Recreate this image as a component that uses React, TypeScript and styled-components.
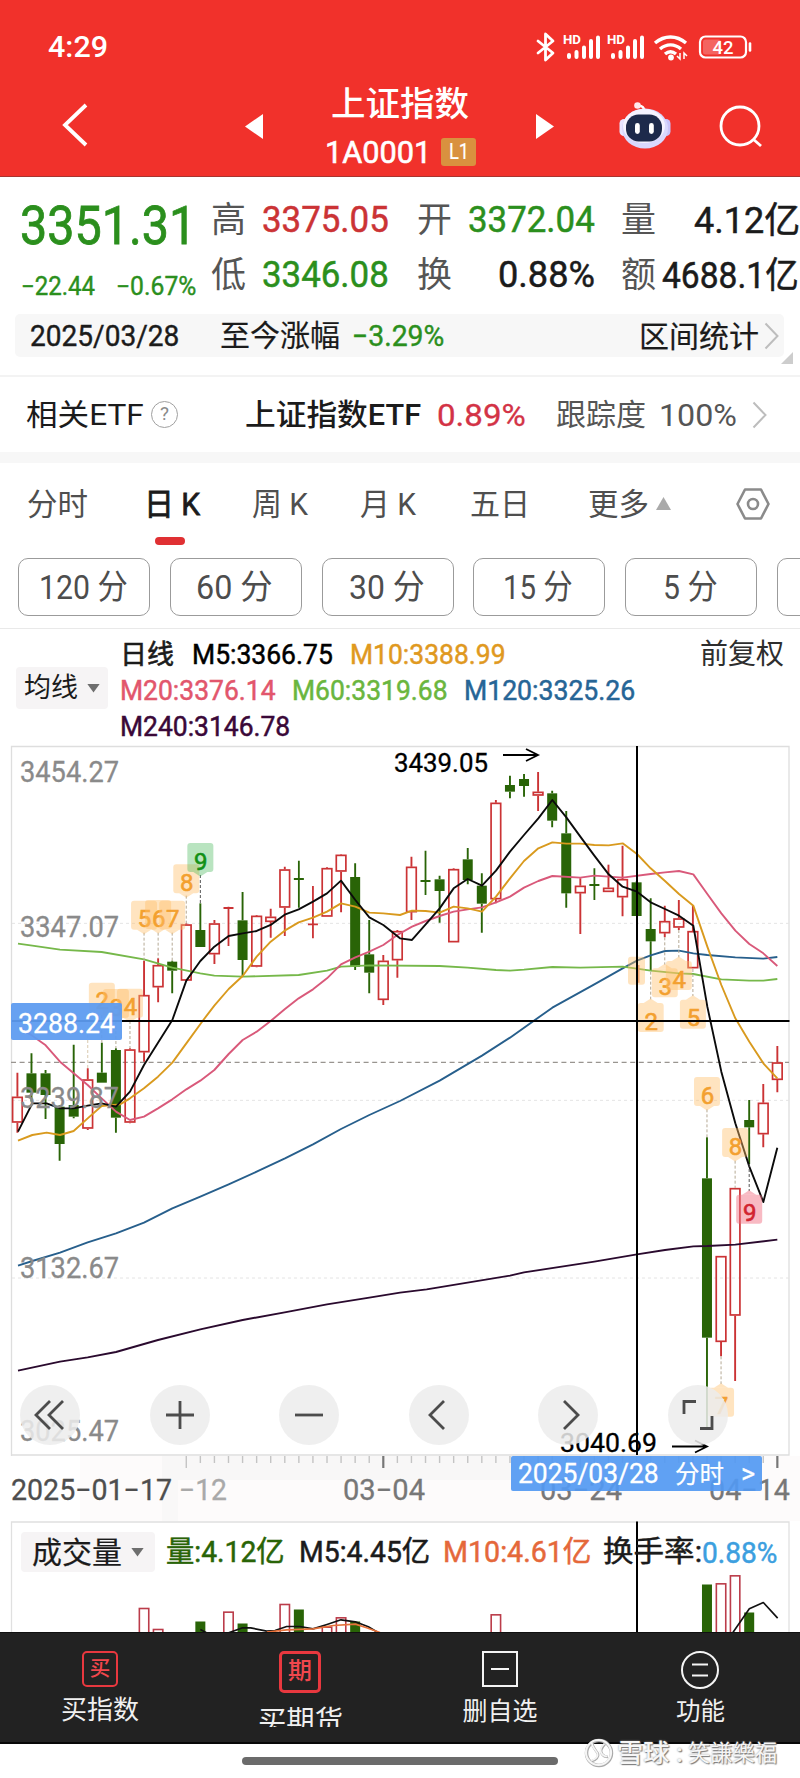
import React, { useLayoutEffect, useRef, useState } from "react";
import styled, { createGlobalStyle } from "styled-components";

const FONT = `Roboto, "Noto Sans CJK SC", sans-serif`;
const GREEN = "#2b8f1d";
const DEEP_GREEN = "#296407";
const RED = "#cb3335";

const Global = createGlobalStyle`
  * { box-sizing: border-box; }
  body { margin: 0; background: #fff; font-family: ${FONT}; color: #1b1b1b; }
`;

/* ---------- text that keeps a fixed column width ---------- */

const FitBox = styled.span<{ $w: number; $ml: number; $size: number; $color?: string; $weight: number; $dy: number; $ink: number }>`
  display: block;
  flex: none;
  width: ${(p) => p.$w}px;
  margin-left: ${(p) => p.$ml}px;
  margin-top: ${(p) => p.$dy}px;
  height: ${(p) => p.$size}px;
  font-size: ${(p) => p.$size}px;
  line-height: ${(p) => p.$size}px;
  font-weight: ${(p) => p.$weight};
  color: ${(p) => p.$color ?? "inherit"};
  -webkit-text-stroke: ${(p) => p.$ink}px currentColor;
  white-space: nowrap;
`;
const FitInner = styled.span`
  display: inline-block;
  transform-origin: left center;
`;

type FitProps = {
  w: number;
  ml?: number;
  dy?: number;
  size: number;
  color?: string;
  weight?: number;
  ink?: number;
  children: React.ReactNode;
};

function Fit({ w, ml = 0, dy = 0, size, color, weight = 400, ink = 0, children }: FitProps) {
  const ref = useRef<HTMLSpanElement>(null);
  const [scale, setScale] = useState(1);
  useLayoutEffect(() => {
    if (ref.current) setScale(w / ref.current.offsetWidth);
  }, [w, children]);
  return (
    <FitBox $w={w} $ml={ml} $size={size} $color={color} $weight={weight} $dy={dy} $ink={ink}>
      <FitInner ref={ref} style={{ transform: `scaleX(${scale})` }}>
        {children}
      </FitInner>
    </FitBox>
  );
}

/* ---------- shell ---------- */

const Page = styled.div`
  width: 800px;
  height: 1778px;
  overflow: hidden;
  background: #fff;
  display: flex;
  flex-direction: column;
`;
const Header = styled.header`
  height: 177px;
  flex: none;
  background: #f1312b;
  border-bottom: 1px solid #a8342f;
  color: #fff;
`;
const StatusBar = styled.div`
  height: 84px;
  padding: 10px 0 0 48px;
  display: flex;
  align-items: center;
`;
const StatusIcons = styled.svg`
  margin-left: 427px;
`;
const TitleBar = styled.div`
  height: 92px;
  display: flex;
  align-items: flex-start;
`;
const Icon = styled.svg<{ $ml: number; $mt?: number }>`
  flex: none;
  display: block;
  margin-left: ${(p) => p.$ml}px;
  margin-top: ${(p) => p.$mt ?? 0}px;
`;
const TitleBlock = styled.div`
  width: 154px;
  margin-left: 62px;
  display: flex;
  flex-direction: column;
`;
const CodeLine = styled.div`
  display: flex;
  align-items: center;
  height: 30px;
  margin-top: 16px;
`;
const LevelBadge = styled.span`
  width: 35px;
  height: 28px;
  margin-left: 10px;
  border-radius: 3px;
  background: #d9913f;
  display: flex;
  align-items: center;
  justify-content: center;
`;

/* ---------- quote ---------- */

const Quote = styled.section`
  height: 137px;
  flex: none;
  display: flex;
`;
const PriceCol = styled.div`
  width: 211px;
  flex: none;
  padding: 22px 0 0 21px;
`;
const Changes = styled.div`
  display: flex;
  margin-top: 21px;
`;
const Facts = styled.div`
  width: 589px;
  padding-top: 25px;
  display: flex;
  flex-direction: column;
  gap: 18px;
`;
const FactRow = styled.div`
  display: flex;
  align-items: center;
  height: 37px;
`;
const RangeBar = styled.div`
  width: 769px;
  height: 43px;
  flex: none;
  margin-left: 15px;
  border-radius: 5px;
  background: #f7f7f7;
  display: flex;
  align-items: center;
`;
const Corner = styled.div`
  height: 20px;
  flex: none;
  display: flex;
  justify-content: flex-end;
  align-items: flex-start;
  padding-right: 7px;
  border-bottom: 2px solid #f3f3f3;
`;
const CornerMark = styled.div`
  width: 12px;
  height: 12px;
  margin-top: -5px;
  background: #cdcdcd;
  clip-path: polygon(100% 0, 100% 100%, 0 100%);
`;
const EtfRow = styled.div`
  height: 75px;
  flex: none;
  display: flex;
  align-items: center;
`;
const Help = styled.span`
  width: 27px;
  height: 27px;
  flex: none;
  margin-left: 7px;
  border: 1.5px solid #a0a0a0;
  border-radius: 50%;
  color: #8a8a8a;
  font-size: 19px;
  line-height: 24px;
  text-align: center;
`;
const Band = styled.div`
  height: 11px;
  flex: none;
  background: #f7f7f7;
`;

/* ---------- period tabs ---------- */

const Tabs = styled.nav`
  height: 95px;
  flex: none;
  display: flex;
  padding: 26px 0 0 27px;
  color: #4f4f4f;
`;
const Tab = styled.div<{ $w: number }>`
  width: ${(p) => p.$w}px;
  display: flex;
  flex-direction: column;
`;
const Underline = styled.span`
  width: 30px;
  height: 8px;
  margin: 17px 0 0 9px;
  border-radius: 4px;
  background: #e03033;
`;
const Minutes = styled.div`
  height: 71px;
  flex: none;
  display: flex;
  gap: 19.8px;
  padding-left: 18px;
  overflow: hidden;
  border-bottom: 1px solid #e9e9e9;
`;
const MinuteButton = styled.div`
  flex: none;
  width: 132px;
  height: 58px;
  border: 1px solid #9b9b9b;
  border-radius: 10px;
  display: flex;
  align-items: center;
  justify-content: center;
  color: #4d4d4d;
`;

/* ---------- moving averages legend ---------- */

const Legend = styled.div`
  height: 116px;
  flex: none;
  display: flex;
`;
const Chip = styled.div<{ $w: number; $h: number; $mt: number; $ml: number }>`
  flex: none;
  width: ${(p) => p.$w}px;
  height: ${(p) => p.$h}px;
  margin: ${(p) => p.$mt}px 0 0 ${(p) => p.$ml}px;
  border-radius: 4px;
  background: #f6f4f5;
  display: flex;
  align-items: center;
`;
const Down = styled.span`
  width: 13px;
  height: 9px;
  margin-left: 9px;
  background: #6e6e6e;
  clip-path: polygon(0 0, 100% 0, 50% 100%);
`;
const LegendLines = styled.div`
  width: 690px;
  padding-top: 8px;
  display: flex;
  flex-direction: column;
`;
const LegendLine = styled.div`
  display: flex;
  align-items: center;
  height: 36px;
`;

/* ---------- chart ---------- */

const ChartArea = styled.section`
  position: relative;
  height: 776px;
  flex: none;
`;
const Plot = styled.svg`
  display: block;
`;
const Controls = styled.div`
  position: absolute;
  left: 20px;
  top: 640px;
  display: flex;
  gap: 69.6px;
`;
const RoundButton = styled.div`
  width: 60px;
  height: 60px;
  border-radius: 50%;
  background: rgba(236, 236, 236, 0.86);
`;
const DatePill = styled.div`
  position: absolute;
  left: 511px;
  top: 711px;
  width: 251px;
  height: 35px;
  border-radius: 2px;
  background: rgba(83, 153, 242, 0.92);
  color: #fff;
  display: flex;
  align-items: center;
  padding-top: 2px;
`;
const VolumePanel = styled.section`
  position: relative;
  height: 111px;
  flex: none;
  overflow: hidden;
`;
const VolumePlot = styled.svg`
  position: absolute;
  left: 0;
  top: 0;
`;
const VolumeHead = styled.div`
  display: flex;
  position: relative;
`;
const VolumeValues = styled.div`
  display: flex;
  align-items: center;
  height: 40px;
  margin-top: 11px;
`;

/* ---------- bottom ---------- */

const BottomNav = styled.nav`
  height: 112px;
  flex: none;
  background: #222;
  border-top: 1px solid #111;
  border-bottom: 2px solid #080808;
  color: #f0f0f0;
  display: flex;
`;
const NavItem = styled.div`
  width: 200px;
  height: 94px;
  overflow: hidden;
  padding-top: 18px;
  display: flex;
  flex-direction: column;
  align-items: center;
`;
const Seal = styled.span<{ $size: number; $b: number }>`
  width: ${(p) => p.$size}px;
  height: ${(p) => p.$size}px;
  flex: none;
  border: ${(p) => p.$b}px solid #e8383f;
  border-radius: 5px;
  color: #f2474d;
  font-size: ${(p) => p.$size * 0.57}px;
  font-weight: 500;
  display: flex;
  align-items: center;
  justify-content: center;
  line-height: 1;
`;
const HomeArea = styled.footer`
  position: relative;
  height: 34px;
  flex: none;
  padding-top: 13px;
`;
const HomeBar = styled.div`
  width: 316px;
  height: 8px;
  margin-left: 242px;
  border-radius: 4px;
  background: #6b6b6b;
`;
const Watermark = styled.div`
  position: absolute;
  left: 584px;
  top: -7px;
  height: 32px;
  display: flex;
  align-items: center;
  color: #f6f6f6;
  text-shadow: 1px 1px 1px #777, 0 0 2px #999;
`;

/* ---------- chart data: plot units are thirds of a pixel from the top edge ---------- */

const px = (i: number) => 17.4 + i * 14.073;
const py = (v: number) => 740 + v / 3;

// kind, high, body top, body bottom, low
type Candle = ["r" | "g", number, number, number, number];
const CANDLES: Candle[] = [
  ["r", 998, 1070, 1148, 1178], ["g", 940, 1000, 1058, 1085], ["g", 990, 1000, 1065, 1137],
  ["g", 1095, 1100, 1212, 1262], ["g", 914, 1095, 1130, 1135], ["r", 985, 1018, 1166, 1170],
  ["g", 908, 998, 1028, 1028], ["g", 925, 930, 1133, 1178], ["r", 925, 928, 1148, 1150],
  ["r", 662, 765, 937, 965], ["r", 655, 675, 742, 787], ["g", 662, 665, 692, 760],
  ["r", 550, 553, 722, 722], ["g", 490, 570, 621, 621], ["r", 540, 550, 643, 672],
  ["r", 500, 504, 504, 618], ["g", 456, 541, 660, 708], ["r", 525, 527, 680, 682],
  ["r", 506, 530, 546, 593], ["r", 380, 388, 503, 588], ["g", 362, 417, 417, 503],
  ["r", 438, 553, 553, 595], ["r", 382, 384, 530, 530], ["r", 343, 344, 395, 517],
  ["g", 370, 411, 680, 690], ["g", 540, 643, 698, 760], ["r", 645, 662, 780, 795],
  ["r", 570, 573, 661, 713], ["r", 350, 380, 517, 540], ["g", 332, 423, 423, 465],
  ["g", 407, 418, 453, 548], ["r", 385, 387, 607, 607], ["g", 324, 358, 420, 433],
  ["g", 400, 437, 491, 578], ["r", 180, 188, 478, 490], ["g", 107, 135, 155, 175],
  ["g", 102, 117, 138, 170], ["r", 96, 155, 167, 213], ["g", 152, 160, 242, 262],
  ["g", 213, 280, 460, 503], ["r", 415, 437, 460, 582], ["g", 385, 435, 435, 480],
  ["r", 374, 443, 456, 456], ["r", 317, 417, 472, 529], ["g", 424, 427, 528, 528],
  ["g", 475, 567, 604, 693], ["r", 497, 543, 580, 592], ["r", 480, 535, 563, 570],
  ["r", 497, 573, 685, 685], ["g", 1192, 1315, 1793, 2065], ["r", 1548, 1548, 1806, 1849],
  ["r", 1344, 1344, 1727, 1923], ["g", 1080, 1140, 1162, 1272], ["r", 1032, 1088, 1183, 1222],
  ["r", 918, 967, 1020, 1057],
];

const M5 = "54,1175 97,1090 140,1090 180,1105 221,1105 263,1097 305,1090 348,1100 390,1055 432,975 517,840 559,722 601,663 643,620 686,588 728,580 770,573 812,555 854,524 896,508 939,485 981,460 1023,422 1066,480 1108,532 1150,555 1200,595 1236,600 1277,553 1319,505 1361,445 1403,417 1446,437 1488,392 1530,335 1572,285 1615,235 1657,180 1699,232 1741,290 1783,347 1826,403 1868,440 1911,455 1952,487 1995,507 2037,527 2080,557 2122,800 2164,995 2206,1150 2248,1280 2290,1386 2332,1223";
const M10 = "54,1202 97,1185 140,1178 180,1185 221,1173 263,1135 305,1098 360,1093 390,1075 432,1045 474,1010 517,968 559,910 610,840 643,797 686,747 728,708 770,650 812,605 854,572 896,547 939,533 981,515 1023,490 1066,500 1108,518 1150,520 1200,525 1236,512 1277,513 1319,518 1361,500 1403,505 1446,515 1488,470 1530,415 1572,363 1615,325 1657,307 1699,311 1741,311 1783,315 1826,316 1868,310 1911,342 1952,385 1995,423 2037,462 2080,497 2122,620 2164,735 2206,835 2248,905 2290,970 2332,1015";
const M20 = "54,862 97,887 137,916 180,965 221,1000 263,1035 305,1075 348,1115 390,1140 432,1130 474,1105 517,1078 559,1048 601,1022 643,990 686,942 728,900 770,875 812,843 854,808 896,775 939,748 981,715 1023,673 1066,652 1108,635 1150,615 1192,585 1236,560 1277,543 1319,528 1361,515 1403,508 1446,502 1488,487 1530,470 1572,443 1615,423 1657,408 1741,413 1783,407 1868,413 1952,402 1995,397 2037,393 2080,403 2122,462 2164,520 2206,572 2248,612 2290,640 2332,678";
const M60 = "54,611 97,617 180,629 305,636 432,658 517,683 601,700 643,707 728,710 896,705 981,692 1023,680 1108,676 1319,678 1403,683 1488,690 1530,692 1572,689 1657,681 1741,683 1868,680 1952,692 2037,700 2080,702 2164,718 2248,722 2290,722 2332,717";
const M120 = "54,1577 97,1563 180,1538 263,1507 348,1480 432,1448 517,1405 601,1370 686,1333 770,1295 855,1255 939,1213 1023,1167 1108,1125 1200,1083 1319,1022 1446,947 1530,893 1657,803 1783,733 1868,685 1911,662 1952,646 1995,633 2037,632 2080,640 2122,645 2206,652 2290,656 2332,651";
const M240 = "54,1892 180,1865 263,1852 348,1836 474,1800 601,1768 728,1740 854,1717 981,1693 1108,1673 1200,1658 1280,1648 1530,1607 1572,1597 1783,1565 1911,1543 1995,1530 2080,1519 2122,1518 2206,1514 2332,1499";

function Curve({ pts, color, width = 1.9 }: { pts: string; color: string; width?: number }) {
  return (
    <g transform="translate(0 740) scale(0.33333)">
      <polyline points={pts} fill="none" stroke={color} strokeWidth={width * 3} strokeLinejoin="round" />
    </g>
  );
}

function CandleMark({ i, c }: { i: number; c: Candle }) {
  const [kind, hi, top, bottom, lo] = c;
  const x = px(i);
  const color = kind === "r" ? RED : DEEP_GREEN;
  if (top === bottom) {
    return (
      <g stroke={color} strokeWidth={1.8}>
        <path d={`M${x} ${py(hi)}V${py(lo)}M${x - 5} ${py(top)}h10`} />
      </g>
    );
  }
  return (
    <g stroke={color} strokeWidth={1.9}>
      <path d={`M${x} ${py(hi)}V${py(top)}M${x} ${py(bottom)}V${py(lo)}`} />
      {kind === "r" ? (
        <rect x={x - 4.8} y={py(top) + 0.7} width={9.6} height={Math.max(1.5, (bottom - top) / 3 - 1.4)} fill="none" strokeWidth={1.7} />
      ) : (
        <rect x={x - 5} y={py(top)} width={10} height={(bottom - top) / 3} fill={color} stroke="none" />
      )}
    </g>
  );
}

// candle index, digit, badge top, pointer direction, leader from/to
type Tag = { i: number; n: string; top: number; dir: "up" | "down"; from: number; to: number; bg?: string; fg?: string };
const TAGS: Tag[] = [
  { i: 6, n: "2", top: 728, dir: "down", from: 825, to: 908 },
  { i: 7, n: "3", top: 747, dir: "down", from: 843, to: 925 },
  { i: 8, n: "4", top: 746, dir: "down", from: 843, to: 925 },
  { i: 9, n: "5", top: 482, dir: "down", from: 578, to: 662 },
  { i: 10, n: "6", top: 480, dir: "down", from: 578, to: 655 },
  { i: 11, n: "7", top: 482, dir: "down", from: 578, to: 662 },
  { i: 12, n: "8", top: 373, dir: "down", from: 467, to: 550 },
  { i: 13, n: "9", top: 309, dir: "down", from: 405, to: 490, bg: "rgba(60,180,80,.36)", fg: "#129015" },
  { i: 45, n: "2", top: 789, dir: "up", from: 695, to: 778 },
  { i: 46, n: "3", top: 685, dir: "up", from: 592, to: 674 },
  { i: 47, n: "4", top: 663, dir: "up", from: 570, to: 652 },
  { i: 48, n: "5", top: 779, dir: "up", from: 687, to: 768 },
  { i: 49, n: "6", top: 1011, dir: "down", from: 1108, to: 1192 },
  { i: 51, n: "8", top: 1164, dir: "down", from: 1262, to: 1344 },
  { i: 50, n: "7", top: 1943, dir: "up", from: 1849, to: 1932 },
  { i: 52, n: "9", top: 1364, dir: "up", from: 1272, to: 1353, bg: "rgba(240,110,130,.48)", fg: "#d22430" },
];

function TagMark({ t }: { t: Tag }) {
  const x = px(t.i);
  const y = py(t.top);
  const h = 29;
  const bg = t.bg ?? "rgba(255,190,105,.42)";
  const tip = t.dir === "down" ? `M${x - 7} ${y + h}h14l-7 4.5z` : `M${x - 7} ${y}h14l-7 -4.5z`;
  const baseline = y + 26.5;
  return (
    <g>
      <path d={`M${x} ${py(t.from)}V${py(t.to)}`} stroke={t.bg ? "#555" : "#b5a994"} strokeWidth={1} strokeDasharray="3 2" />
      <rect x={x - 13} y={y} width={26} height={h} rx={3} fill={bg} />
      <path d={tip} fill={bg} />
      <text x={x + 0.5} y={baseline} textAnchor="middle" fontSize={24} fill={t.fg ?? "#f3a02f"} stroke={t.fg ?? "#f3a02f"} strokeWidth={0.6}>
        {t.n}
      </text>
    </g>
  );
}

function Label({ x, y, w, size = 29, fill = "#8a8a8a", ink = 0.3, children }: { x: number; y: number; w: number; size?: number; fill?: string; ink?: number; children: string }) {
  return (
    <text x={x} y={y} fontSize={size} fill={fill} stroke={fill} strokeWidth={ink} textLength={w} lengthAdjust="spacingAndGlyphs">
      {children}
    </text>
  );
}

function PriceChart() {
  return (
    <Plot width={800} height={776} viewBox="0 745 800 776" fontFamily={FONT}>
      <rect x={80} y={1456} width={720} height={65} fill="#fdfbfb" />
      <rect x={162} y={1456} width={349} height={24} fill="#f8f7f7" />
      <rect x={162} y={1480} width={16} height={41} fill="#f9f8f8" />
      <path d="M11.5 1456V746.5H789V1455H11" fill="none" stroke="#dedede" strokeWidth={1.3} />
      {[550, 1081, 1614].map((v) => (
        <path key={v} d={`M12 ${py(v)}H789`} stroke="#e4e4e4" strokeWidth={1} strokeDasharray="3 3" />
      ))}
      <path d={`M11 ${py(967)}H789`} stroke="#999590" strokeWidth={1.2} strokeDasharray="5 3.6" />
      <path d={`M${px(5)} ${py(870)}V${py(985)}`} stroke="#d9c9ae" strokeDasharray="3 2" />

      {CANDLES.map((c, i) => (
        <CandleMark key={i} i={i} c={c} />
      ))}
      <Curve pts={M240} color="#2a0a2e" />
      <Curve pts={M120} color="#275f8c" />
      <Curve pts={M60} color="#76b84a" />
      <Curve pts={M20} color="#d9597a" />
      <Curve pts={M10} color="#d99a1e" />
      <Curve pts={M5} color="#0b0b0b" />

      <rect x={628} y={py(650)} width={17} height={28} rx={3} fill="rgba(255,190,105,.42)" />
      <path d={`M638.8 ${py(675)}V${py(728)}`} stroke="#f3a06a" strokeWidth={1.4} />
      {TAGS.map((t) => (
        <TagMark key={t.i} t={t} />
      ))}

      <Label x={20} y={782} w={99}>3454.27</Label>
      <Label x={20} y={937} w={99}>3347.07</Label>
      <Label x={20} y={1107.5} w={99}>3239.87</Label>
      <Label x={20} y={1277.5} w={99}>3132.67</Label>
      <Label x={20} y={1441} w={99}>3025.47</Label>

      <path d={`M12 ${py(843)}H789.5`} stroke="#000" strokeWidth={2.2} />
      <path d="M637 746V1455" stroke="#000" strokeWidth={2} />
      <rect x={11} y={1003} width={111} height={37} rx={2} fill="rgb(92,155,240)" fillOpacity={0.94} />
      <Label x={18} y={1033} w={97} size={27.5} fill="#fff">3288.24</Label>

      <Label x={394} y={771.5} w={94} size={25.5} fill="#000">3439.05</Label>
      <path d="M503 755H538M526 749l12 6l-12 6" fill="none" stroke="#000" strokeWidth={1.8} />
      <Label x={560} y={1452} w={97} size={25.5} fill="#000">3040.69</Label>
      <path d="M672 1446.5H706M695 1440.5l12 6l-12 6" fill="none" stroke="#000" strokeWidth={1.8} />

      {Array.from({ length: 43 }, (_, k) => k + 12).map((i) => (
        <path
          key={i}
          d={`M${px(i)} 1456v${i === 12 || i === 26 || i === 40 || i === 54 ? 12 : 7}`}
          stroke={i === 26 || i === 54 ? "#777" : "#c4c4c4"}
          strokeWidth={i === 26 || i === 54 ? 2.2 : 1.4}
        />
      ))}
      <Label x={11} y={1500} w={161} fill="#4e4e4e">2025−01−17</Label>
      <Label x={179} y={1500} w={48} fill="#a9a9a9">−12</Label>
      <Label x={343} y={1500} w={82} fill="#777">03−04</Label>
      <Label x={540} y={1500} w={82} fill="#777">03−24</Label>
      <Label x={709} y={1500} w={81} fill="#777">04−14</Label>
    </Plot>
  );
}

const CONTROL_GLYPHS = [
  "M30 16 16 30 30 44M43 16 29 30 43 44",
  "M30 16V44M16 30H44",
  "M16 30H44",
  "M35 16 21 30 35 44",
  "M26 16 40 30 26 44",
  "M28 16.5H16V29M44 31V43.5H32",
];

// candle index, kind, top of the bar
const VOLUMES: [number, "r" | "g", number][] = [
  [9, "r", 477], [10, "r", 540], [13, "g", 516], [15, "r", 488], [16, "g", 522], [19, "r", 465],
  [20, "g", 480], [22, "r", 533], [23, "r", 505], [24, "g", 516], [34, "r", 496], [49, "g", 405],
  [50, "r", 403], [51, "r", 379], [52, "g", 489],
];

function VolumeChart() {
  const y = (v: number) => 1450 + v / 3;
  return (
    <VolumePlot width={800} height={112} viewBox="0 1521.500 800 112">
      <path d="M11.5 1633V1522.500H789V1633" fill="none" stroke="#e0e0e0" strokeWidth={1.3} />
      {VOLUMES.map(([i, kind, top]) =>
        kind === "r" ? (
          <rect key={i} x={px(i) - 4.7} y={y(top)} width={9.4} height={80} fill="none" stroke="#bb3c4a" strokeWidth={1.6} />
        ) : (
          <rect key={i} x={px(i) - 5} y={y(top)} width={10} height={80} fill={DEEP_GREEN} />
        )
      )}
      <g transform="translate(0 1450) scale(0.33333)" fill="none" strokeWidth={5} strokeLinejoin="round">
        <path d="M601 540L620 550M680 552L728 535L752 535L800 545L825 543L860 531L900 531L939 538L981 525L1023 511L1066 517L1105 532L1130 547M2198 550L2248 478L2290 459L2333 506" stroke="#111" />
        <path d="M800 548L860 541L939 538L1000 528L1066 524L1100 535L1140 549" stroke="#e5713a" />
      </g>
      <path d="M637 1522V1633" stroke="#000" strokeWidth={2} />
    </VolumePlot>
  );
}

/* ---------- icons ---------- */

function Signal({ x }: { x: number }) {
  return (
    <g transform={`translate(${x} 0)`}>
      <text x={0} y={12.5} fontSize={12.5} fontWeight={700} fill="#fff" fontFamily={FONT} textLength={18} lengthAdjust="spacingAndGlyphs">HD</text>
      <path d="M6 26v-2M13.500 26v-5M21 26v-9.500M28 26V10M35 26V6.500" stroke="#fff" strokeWidth={4} strokeLinecap="round" />
    </g>
  );
}

function StatusSvg() {
  return (
    <StatusIcons width={220} height={32} viewBox="0 0 220 32" fill="none">
      <path d="M3 10 18 22 10.500 29V3L18 10 3 22" stroke="#fff" strokeWidth={2.8} strokeLinejoin="round" strokeLinecap="round" />
      <Signal x={28} />
      <Signal x={72} />
      <path d="M120 12c9.500-8 21.500-8 31 0M125 18c6.500-5.500 14.500-5.500 21 0M130 23c3.500-3 7.500-3 11 0" stroke="#fff" strokeWidth={3.4} />
      <circle cx={136} cy={26.500} r={2.900} fill="#fff" />
      <path d="M145 22v6l-3-3M149 28v-6l3 3" stroke="#fff" strokeWidth={1.500} />
      <rect x={165} y={5.500} width={46} height={21} rx={5.500} stroke="#fff" strokeWidth={2.2} />
      <rect x={168} y={8.500} width={18} height={15} rx={2.500} fill="#fff" fillOpacity={0.25} />
      <path d="M215 12.500v7" stroke="#fff" strokeWidth={2.600} strokeLinecap="round" />
      <text x={188} y={22.500} fontSize={18.500} fontWeight={500} textAnchor="middle" fill="#fff" fontFamily={FONT}>42</text>
    </StatusIcons>
  );
}

function Robot() {
  return (
    <Icon $ml={65} $mt={17} width={52} height={49} viewBox="0 0 52 49">
      <path d="M18 5c5-1 7 1 8 6" fill="none" stroke="#fff" strokeWidth={2.500} />
      <circle cx={18.500} cy={4.500} r={3.300} fill="#ffe9ee" />
      <rect x={0.500} y={18} width={9} height={17} rx={4.500} fill="#e9e4ff" />
      <rect x={42.500} y={18} width={9} height={17} rx={4.500} fill="#c8c4fa" />
      <ellipse cx={26} cy={27.500} rx={23} ry={20} fill="#d9d8fd" />
      <ellipse cx={25} cy={25} rx={21} ry={17} fill="#f5f3ff" />
      <rect x={7} y={13.500} width={36} height={27} rx={12.500} fill="#1d2a4b" />
      <rect x={16} y={22} width={4.800} height={11} rx={2.400} fill="#fff" />
      <rect x={30} y={22} width={4.800} height={11} rx={2.400} fill="#fff" />
    </Icon>
  );
}

function Chevron({ ml, color = "#bdbdbd" }: { ml: number; color?: string }) {
  return (
    <Icon $ml={ml} width={16} height={28} viewBox="0 0 16 28">
      <path d="M1.500 1.500 13.500 14 1.500 26.500" fill="none" stroke={color} strokeWidth={2} />
    </Icon>
  );
}

const GRAY = "#555";

export default function App() {
  return (
    <Page>
      <Global />
      <Header>
        <StatusBar>
          <Fit w={60} size={30} weight={500}>4:29</Fit>
          <StatusSvg />
        </StatusBar>
        <TitleBar>
          <Icon $ml={61} $mt={19} width={28} height={44} viewBox="0 0 28 44">
            <path d="M25 2 4 22 25 42" fill="none" stroke="#fff" strokeWidth={3.800} />
          </Icon>
          <Icon $ml={156} $mt={30} width={18} height={25} viewBox="0 0 18 25">
            <path d="M18 0V25L0 12.500z" fill="#fff" />
          </Icon>
          <TitleBlock>
            <Fit w={138} ml={6} dy={3} size={34} weight={500}>上证指数</Fit>
            <CodeLine>
              <Fit w={106} ml={0} size={31} ink={0.6}>1A0001</Fit>
              <LevelBadge>
                <Fit w={20} size={22} ink={0.2}>L1</Fit>
              </LevelBadge>
            </CodeLine>
          </TitleBlock>
          <Icon $ml={57} $mt={30} width={18} height={25} viewBox="0 0 18 25">
            <path d="M0 0V25L18 12.500z" fill="#fff" />
          </Icon>
          <Robot />
          <Icon $ml={47.500} $mt={21} width={44} height={44} viewBox="0 0 44 44">
            <circle cx={21} cy={21} r={19} fill="none" stroke="#fff" strokeWidth={2.800} />
            <path d="M34 34 42 41" stroke="#fff" strokeWidth={2.800} />
          </Icon>
        </TitleBar>
      </Header>

      <Quote>
        <PriceCol>
          <Fit w={176} ml={-1} size={54} ink={0.8} color={GREEN}>3351.31</Fit>
          <Changes>
            <Fit w={74} size={25} color={GREEN} ink={0.4}>−22.44</Fit>
            <Fit w={80} ml={21} size={25} color={GREEN} ink={0.4}>−0.67%</Fit>
          </Changes>
        </PriceCol>
        <Facts>
          <FactRow>
            <Fit w={35} size={35} color={GRAY}>高</Fit>
            <Fit w={127} ml={16} size={36.500} color={RED} ink={0.5}>3375.05</Fit>
            <Fit w={35} ml={28} size={35} color={GRAY}>开</Fit>
            <Fit w={127} ml={16} size={36.500} color={GREEN} ink={0.5}>3372.04</Fit>
            <Fit w={35} ml={26} size={35} color={GRAY}>量</Fit>
            <Fit w={106} ml={38} size={36} ink={0.5}>4.12亿</Fit>
          </FactRow>
          <FactRow>
            <Fit w={35} size={35} color={GRAY}>低</Fit>
            <Fit w={127} ml={16} size={36.500} color={GREEN} ink={0.5}>3346.08</Fit>
            <Fit w={35} ml={28} size={35} color={GRAY}>换</Fit>
            <Fit w={97} ml={46} size={36.500} ink={0.5}>0.88%</Fit>
            <Fit w={35} ml={26} size={35} color={GRAY}>额</Fit>
            <Fit w={137} ml={6} size={36} ink={0.5}>4688.1亿</Fit>
          </FactRow>
        </Facts>
      </Quote>
      <RangeBar>
        <Fit w={149} ml={15} dy={1} size={29} ink={0.4}>2025/03/28</Fit>
        <Fit w={120} ml={41} size={30} ink={0.2}>至今涨幅</Fit>
        <Fit w={92} ml={12} dy={1} size={29} color={GREEN} ink={0.4}>−3.29%</Fit>
        <Fit w={120} ml={195} dy={3} size={30} ink={0.2}>区间统计</Fit>
        <Chevron ml={5} />
      </RangeBar>
      <Corner>
        <CornerMark />
      </Corner>
      <EtfRow>
        <Fit w={118} ml={26} dy={1} size={30}>相关ETF</Fit>
        <Help>?</Help>
        <Fit w={176} ml={67} dy={1} size={30} weight={500}>上证指数ETF</Fit>
        <Fit w={89} ml={16} dy={1} size={32} color="#d33346" ink={0.3}>0.89%</Fit>
        <Fit w={90} ml={30} dy={1} size={30} color={GRAY}>跟踪度</Fit>
        <Fit w={78} ml={13} dy={1} size={31} color={GRAY}>100%</Fit>
        <Chevron ml={15} />
      </EtfRow>
      <Band />

      <Tabs>
        <Tab $w={119}><Fit w={61} size={31}>分时</Fit></Tab>
        <Tab $w={106}>
          <Fit w={56} ml={-2} size={31} ink={0.8} color="#1b1b1b">日 K</Fit>
          <Underline />
        </Tab>
        <Tab $w={109}><Fit w={56} size={31}>周 K</Fit></Tab>
        <Tab $w={109}><Fit w={56} ml={-1} size={31}>月 K</Fit></Tab>
        <Tab $w={118}><Fit w={60} size={31}>五日</Fit></Tab>
        <Tab $w={67}><Fit w={61} size={31}>更多</Fit></Tab>
        <Icon $ml={1} $mt={8} width={15} height={13} viewBox="0 0 15 13">
          <path d="M7.500 0 15 13H0z" fill="#aaa" />
        </Icon>
        <Icon $ml={65} $mt={-1} width={34} height={32} viewBox="0 0 34 32">
          <path d="M9 1.500H25L32.500 16 25 30.500H9L1.500 16z" fill="none" stroke="#8b8b8b" strokeWidth={2.600} strokeLinejoin="round" />
          <circle cx={17} cy={16} r={5} fill="none" stroke="#8b8b8b" strokeWidth={2.600} />
        </Icon>
      </Tabs>
      <Minutes>
        <MinuteButton><Fit w={89} ml={-2} size={34}>120 分</Fit></MinuteButton>
        <MinuteButton><Fit w={77} ml={-2} size={34}>60 分</Fit></MinuteButton>
        <MinuteButton><Fit w={76} ml={-2} size={34}>30 分</Fit></MinuteButton>
        <MinuteButton><Fit w={70} ml={-3} size={34}>15 分</Fit></MinuteButton>
        <MinuteButton><Fit w={55} ml={-1} size={34}>5 分</Fit></MinuteButton>
        <MinuteButton />
      </Minutes>

      <Legend>
        <Chip $w={92} $h={42} $mt={38} $ml={16}>
          <Fit w={54} ml={8} dy={1} size={27}>均线</Fit>
          <Down />
        </Chip>
        <LegendLines>
          <LegendLine>
            <Fit w={54} ml={12} size={27} ink={0.6}>日线</Fit>
            <Fit w={141} ml={18} size={28} color="#000" ink={0.5}>M5:3366.75</Fit>
            <Fit w={156} ml={17} size={28} color="#e0991f" ink={0.5}>M10:3388.99</Fit>
            <Fit w={84} ml={194} size={28} color="#2e2e2e">前复权</Fit>
          </LegendLine>
          <LegendLine>
            <Fit w={156} ml={12} size={28} color="#e2566c" ink={0.5}>M20:3376.14</Fit>
            <Fit w={156} ml={16} size={28} color="#6ab63e" ink={0.5}>M60:3319.68</Fit>
            <Fit w={171} ml={16} size={28} color="#266596" ink={0.5}>M120:3325.26</Fit>
          </LegendLine>
          <LegendLine>
            <Fit w={170} ml={12} size={28} color="#3a0838" ink={0.5}>M240:3146.78</Fit>
          </LegendLine>
        </LegendLines>
      </Legend>

      <ChartArea>
        <PriceChart />
        <Controls>
          {CONTROL_GLYPHS.map((d) => (
            <RoundButton key={d}>
              <svg width={60} height={60} viewBox="0 0 60 60">
                <path d={d} fill="none" stroke="#4c4c4c" strokeWidth={2.800} />
              </svg>
            </RoundButton>
          ))}
        </Controls>
        <DatePill>
          <Fit w={141} ml={7} size={27} ink={0.3}>2025/03/28</Fit>
          <Fit w={49} ml={16} size={25} ink={0.2}>分时</Fit>
          <Fit w={14} ml={17} size={27} ink={0.3}>&gt;</Fit>
        </DatePill>
      </ChartArea>

      <VolumePanel>
        <VolumeChart />
        <VolumeHead>
          <Chip $w={134} $h={40} $mt={11} $ml={21}>
            <Fit w={90} ml={11} dy={1} size={30} ink={0.2}>成交量</Fit>
            <Down />
          </Chip>
          <VolumeValues>
            <Fit w={119} ml={11} dy={1} size={29} color={DEEP_GREEN} ink={0.5}>量:4.12亿</Fit>
            <Fit w={131} ml={14} dy={1} size={29} ink={0.5}>M5:4.45亿</Fit>
            <Fit w={148} ml={13} dy={1} size={29} color="#e5683a" ink={0.5}>M10:4.61亿</Fit>
            <Fit w={99} ml={12} dy={1} size={29} ink={0.5}>换手率:</Fit>
            <Fit w={75} ml={0} dy={1} size={30} color="#3c9fdf" ink={0.5}>0.88%</Fit>
          </VolumeValues>
        </VolumeHead>
      </VolumePanel>

      <BottomNav>
        <NavItem>
          <Seal $size={36} $b={2}>买</Seal>
          <Fit w={78} dy={10} size={26}>买指数</Fit>
        </NavItem>
        <NavItem>
          <Seal $size={42} $b={3}>期</Seal>
          <Fit w={85} dy={15} size={28}>买期货</Fit>
        </NavItem>
        <NavItem>
          <svg width={36} height={36} viewBox="0 0 36 36" fill="none" stroke="#f4f4f4" strokeWidth={2}>
            <rect x={1} y={1} width={34} height={34} />
            <path d="M9 18H27" />
          </svg>
          <Fit w={75} dy={12} size={25}>删自选</Fit>
        </NavItem>
        <NavItem>
          <svg width={38} height={38} viewBox="0 0 38 38" fill="none" stroke="#f4f4f4" strokeWidth={2}>
            <circle cx={19} cy={19} r={18} />
            <path d="M11 13.500H27M11 24.500H27" />
          </svg>
          <Fit w={49} dy={10} size={25}>功能</Fit>
        </NavItem>
      </BottomNav>
      <HomeArea>
        <HomeBar />
        <Watermark>
          <svg width={30} height={30} viewBox="0 0 30 30" fill="none">
            <circle cx={15} cy={15} r={12.500} stroke="#aaa" strokeWidth={3.500} />
            <circle cx={14.500} cy={14.500} r={12.500} stroke="#f5f5f5" strokeWidth={2.200} />
            <path d="M8 5c1 6 5 8 6 11s-2 6-6 7M21 6c-4 4-5 7-3 10s4 3 6 3" stroke="#aaa" strokeWidth={2.600} />
            <path d="M7.500 4.500c1 6 5 8 6 11s-2 6-6 7M20.500 5.500c-4 4-5 7-3 10s4 3 6 3" stroke="#f5f5f5" strokeWidth={1.700} />
          </svg>
          <Fit w={66} ml={3} size={25} weight={500}>雪球 :</Fit>
          <Fit w={89} ml={5} size={23}>笑謙樂福</Fit>
        </Watermark>
      </HomeArea>
    </Page>
  );
}
